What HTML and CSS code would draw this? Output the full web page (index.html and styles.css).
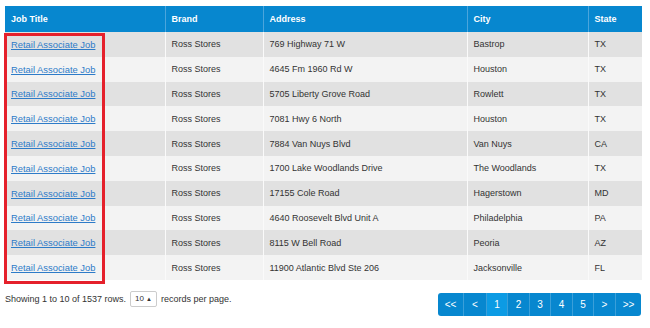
FILE: index.html
```html
<!DOCTYPE html>
<html>
<head>
<meta charset="utf-8">
<link rel="stylesheet" href="styles.css">
</head>
<body>
<div class="wrap">
  <div class="table-box">
    <table class="jobs">
      <colgroup>
        <col class="c1"><col class="c2"><col class="c3"><col class="c4"><col class="c5">
      </colgroup>
      <thead>
        <tr><th>Job Title</th><th>Brand</th><th>Address</th><th>City</th><th>State</th></tr>
      </thead>
      <tbody>
        <tr><td><a href="#">Retail Associate Job</a></td><td>Ross Stores</td><td>769 Highway 71 W</td><td>Bastrop</td><td>TX</td></tr>
        <tr><td><a href="#">Retail Associate Job</a></td><td>Ross Stores</td><td>4645 Fm 1960 Rd W</td><td>Houston</td><td>TX</td></tr>
        <tr><td><a href="#">Retail Associate Job</a></td><td>Ross Stores</td><td>5705 Liberty Grove Road</td><td>Rowlett</td><td>TX</td></tr>
        <tr><td><a href="#">Retail Associate Job</a></td><td>Ross Stores</td><td>7081 Hwy 6 North</td><td>Houston</td><td>TX</td></tr>
        <tr><td><a href="#">Retail Associate Job</a></td><td>Ross Stores</td><td>7884 Van Nuys Blvd</td><td>Van Nuys</td><td>CA</td></tr>
        <tr><td><a href="#">Retail Associate Job</a></td><td>Ross Stores</td><td>1700 Lake Woodlands Drive</td><td>The Woodlands</td><td>TX</td></tr>
        <tr><td><a href="#">Retail Associate Job</a></td><td>Ross Stores</td><td>17155 Cole Road</td><td>Hagerstown</td><td>MD</td></tr>
        <tr><td><a href="#">Retail Associate Job</a></td><td>Ross Stores</td><td>4640 Roosevelt Blvd Unit A</td><td>Philadelphia</td><td>PA</td></tr>
        <tr><td><a href="#">Retail Associate Job</a></td><td>Ross Stores</td><td>8115 W Bell Road</td><td>Peoria</td><td>AZ</td></tr>
        <tr><td><a href="#">Retail Associate Job</a></td><td>Ross Stores</td><td>11900 Atlantic Blvd Ste 206</td><td>Jacksonville</td><td>FL</td></tr>
      </tbody>
    </table>
    <div class="highlight"></div>
  </div>
  <div class="footer">
    <div class="detail">
      <span>Showing 1 to 10 of 1537 rows.</span>
      <span class="size">10 <span class="caret">&#9650;</span></span>
      <span>records per page.</span>
    </div>
    <ul class="pager">
      <li class="first">&lt;&lt;</li>
      <li class="prev">&lt;</li>
      <li class="active">1</li>
      <li class="wide">2</li>
      <li>3</li>
      <li class="wide">4</li>
      <li>5</li>
      <li class="wide">&gt;</li>
      <li class="last">&gt;&gt;</li>
    </ul>
  </div>
</div>
</body>
</html>
```
FILE: styles.css
```css
html, body {
  margin: 0;
  padding: 0;
  background: #fff;
}
body {
  font-family: "Liberation Sans", Arial, sans-serif;
  font-size: 9px;
  color: #333;
}
.wrap {
  width: 637px;
  padding: 6px 0 0 5px;
}
.table-box {
  position: relative;
}
.jobs {
  width: 637px;
  table-layout: fixed;
  border-collapse: collapse;
}
.c1 { width: 160px; }
.c2 { width: 98px; }
.c3 { width: 204px; }
.c4 { width: 121px; }
.c5 { width: 54px; }
.jobs th {
  background: #0787cf;
  color: #fff;
  font-weight: bold;
  text-align: left;
  height: 26px;
  padding: 0 6px;
  border-right: 1px solid #4ba5dc;
}
.jobs th:last-child,
.jobs td:last-child { border-right: none; }
.jobs td {
  height: 24.8px;
  padding: 0 6px;
  border-right: 1px solid #fafafa;
  white-space: nowrap;
}
.jobs tbody tr:nth-child(odd) td { background: #e1e1e1; }
.jobs tbody tr:nth-child(even) td { background: #f3f3f3; }
.jobs a {
  color: #2d7bc8;
  text-decoration: underline;
  font-size: 9.4px;
}
.highlight {
  position: absolute;
  left: -1px;
  top: 27px;
  width: 95px;
  height: 245px;
  border: 3px solid #e5202b;
}
.footer {
  display: flex;
  justify-content: space-between;
  align-items: flex-start;
  margin-top: 13px;
}
.detail {
  display: flex;
  align-items: center;
  gap: 4px;
  margin-top: -1px;
  height: 14px;
}
.size {
  display: inline-flex;
  align-items: center;
  height: 14px;
  padding: 0 4px 0 4px;
  border: 1px solid #ccc;
  border-radius: 2px;
  font-size: 8px;
  background: #fff;
}
.caret {
  font-size: 6px;
  margin-left: 2px;
}
.pager {
  display: flex;
  list-style: none;
  margin: 0 1px 0 0;
  padding: 0;
  border-radius: 3px;
  overflow: hidden;
  height: 23px;
}
.pager li {
  box-sizing: border-box;
  display: flex;
  align-items: center;
  justify-content: center;
  background: #0787cf;
  color: #fff;
  font-size: 10px;
  width: 21px;
  border-left: 1px solid #3a9fd9;
}
.pager li.wide { width: 22px; }
.pager li.first { border-left: none; width: 25px; }
.pager li.prev { width: 23px; }
.pager li.last { width: 26px; }
.pager li.active { background: #0c9be4; }
```
